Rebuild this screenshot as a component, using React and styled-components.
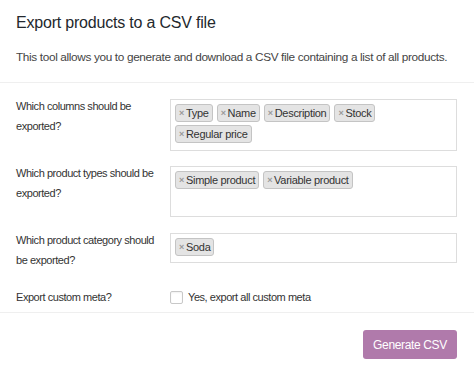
import React, { useState } from "react";
import styled, { createGlobalStyle } from "styled-components";

const GlobalStyle = createGlobalStyle`
  html, body {
    margin: 0;
    padding: 0;
    background: #ffffff;
  }
  body {
    font-family: "Liberation Sans", Arial, Helvetica, sans-serif;
    color: #32373c;
  }
`;

const Page = styled.div`
  width: 474px;
  height: 372px;
  background: #fff;
  overflow: hidden;
`;

const Header = styled.section`
  padding: 13px 16px 0;
  border-bottom: 1px solid #efefef;
  height: 69px;
`;

const Title = styled.h2`
  margin: 0;
  font-size: 16px;
  font-weight: 400;
  line-height: 20px;
  letter-spacing: -0.2px;
  color: #23282d;
`;

const Intro = styled.p`
  margin: 15px 0 0;
  font-size: 11.8px;
  line-height: 18px;
  letter-spacing: -0.35px;
  white-space: nowrap;
  color: #444;
`;

const Form = styled.div`
  padding: 16px 17px 0 16px;
  height: 213px;
  border-bottom: 1px solid #efefef;
`;

const Row = styled.div`
  display: grid;
  grid-template-columns: 154px 1fr;
  align-items: start;
  margin-bottom: ${(p) => p.gap}px;
`;

const Label = styled.div`
  font-size: 11px;
  line-height: 20px;
  letter-spacing: -0.45px;
  white-space: nowrap;
  color: #333;
  margin-top: ${(p) => p.offset || 0}px;
`;

const TagBox = styled.div`
  display: flex;
  flex-wrap: wrap;
  align-content: flex-start;
  gap: 3px 4px;
  height: ${(p) => p.h}px;
  box-sizing: border-box;
  padding: 4px 4px;
  border: 1px solid #ddd;
  background: #fff;
`;

const Tag = styled.span`
  display: inline-flex;
  align-items: center;
  height: 18px;
  box-sizing: border-box;
  padding: 0 3px 0 3px;
  border: 1px solid #c4c4c4;
  border-radius: 3px;
  background: #e4e4e4;
  font-size: 11px;
  letter-spacing: -0.3px;
  color: #333;
`;

const Remove = styled.span`
  font-size: 9px;
  color: #999;
  margin-right: 2px;
  font-weight: 700;
`;

const CheckRow = styled.label`
  display: flex;
  align-items: center;
  gap: 5px;
  height: 20px;
  font-size: 11px;
  letter-spacing: -0.45px;
  color: #333;
`;

const Box = styled.span`
  width: 11px;
  height: 11px;
  border: 1px solid #c8c8c8;
  border-radius: 2px;
  background: #fff;
  box-shadow: inset 0 1px 2px rgba(0, 0, 0, 0.06);
`;

const Footer = styled.div`
  display: flex;
  justify-content: flex-end;
  padding: 17px 17px 0 16px;
`;

const Button = styled.button`
  width: 94px;
  height: 29px;
  border: none;
  border-radius: 3px;
  background: #b07aab;
  color: #fff;
  font-family: inherit;
  font-size: 12px;
  letter-spacing: -0.35px;
  cursor: pointer;
`;

const rows = [
  {
    label: ["Which columns should be", "exported?"],
    tags: ["Type", "Name", "Description", "Stock", "Regular price"],
    h: 52,
    gap: 15,
  },
  {
    label: ["Which product types should be", "exported?"],
    tags: ["Simple product", "Variable product"],
    h: 51,
    gap: 16,
  },
  {
    label: ["Which product category should", "be exported?"],
    tags: ["Soda"],
    h: 30,
    gap: 17,
  },
];

export default function App() {
  const [meta, setMeta] = useState(false);

  return (
    <Page>
      <GlobalStyle />
      <Header>
        <Title>Export products to a CSV file</Title>
        <Intro>
          This tool allows you to generate and download a CSV file containing a list of all products.
        </Intro>
      </Header>
      <Form>
        {rows.map((r) => (
          <Row key={r.label[0]} gap={r.gap}>
            <Label offset={-3}>
              {r.label[0]}
              <br />
              {r.label[1]}
            </Label>
            <TagBox h={r.h}>
              {r.tags.map((t) => (
                <Tag key={t}>
                  <Remove>×</Remove>
                  {t}
                </Tag>
              ))}
            </TagBox>
          </Row>
        ))}
        <Row gap={0}>
          <Label>Export custom meta?</Label>
          <CheckRow onClick={() => setMeta(!meta)}>
            <Box />
            Yes, export all custom meta
          </CheckRow>
        </Row>
      </Form>
      <Footer>
        <Button>Generate CSV</Button>
      </Footer>
    </Page>
  );
}
